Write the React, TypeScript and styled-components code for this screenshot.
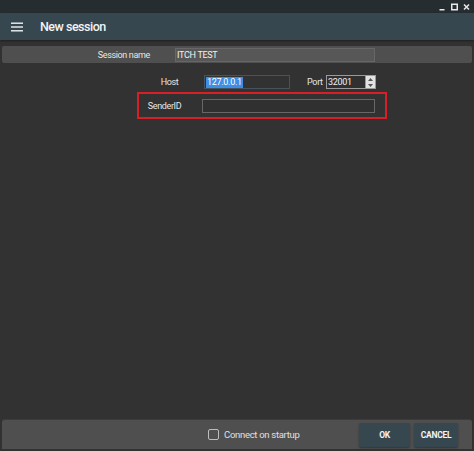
import * as React from 'react'
import styled, {createGlobalStyle} from 'styled-components'

const Global = createGlobalStyle`
  html, body {
    margin: 0;
    padding: 0;
    background: #323232;
    font-family: Roboto, "Liberation Sans", sans-serif;
  }
`;

const Window = styled.div`
  width: 474px;
  height: 451px;
  display: flex;
  flex-direction: column;
  background: #323232;
  overflow: hidden;
`;

const TitleBar = styled.div`
  height: 13px;
  background: #262d31;
  display: flex;
  justify-content: flex-end;
  align-items: center;
  gap: 5px;
  padding-right: 4px;
`;

const AppBar = styled.div`
  height: 27px;
  background: #37474f;
  display: flex;
  align-items: center;
  padding-left: 11px;
  box-shadow: 0 1px 2px rgba(0,0,0,0.4);
`;

const Title = styled.div`
  margin-left: 17px;
  color: #f2f4f5;
  font-size: 12.5px;
  font-weight: 500;
  letter-spacing: -0.5px;
`;

const Content = styled.div`
  flex: 1;
  padding: 6px 2px 0;
`;

const SessionRow = styled.div`
  height: 17px;
  background: #4f4f4f;
  border-radius: 2px;
  display: flex;
  align-items: center;
`;

// shared look of the small form captions
const Label = styled.div<{width: number; gap?: number; align?: string}>`
  width: ${p => p.width}px;
  margin-right: ${p => p.gap || 0}px;
  text-align: ${p => p.align || 'center'};
  color: #e6e6e6;
  font-size: 9px;
  letter-spacing: -0.35px;
  flex-shrink: 0;
`;

const Field = styled.div<{width: number; focused?: boolean}>`
  width: ${p => p.width}px;
  height: 14px;
  box-sizing: border-box;
  border: 1px solid ${p => p.focused ? '#44535e' : '#676767'};
  background: ${p => p.focused ? '#323232' : '#575757'};
  color: #f0f0f0;
  font-size: 9px;
  letter-spacing: -0.3px;
  display: flex;
  align-items: center;
  padding-left: 1px;
`;

const Selected = styled.span`
  background: #3d8ee6;
  color: #ffffff;
  line-height: 11px;
  padding: 0 1px;
`;

const Form = styled.div`
  margin: 12px 0 0 135px;
  display: flex;
  flex-direction: column;
  gap: 3px;
`;

const HostRow = styled.div`
  display: flex;
  align-items: center;
  padding-left: 2px;
`;

const PortLabel = styled.div`
  margin-left: 17px;
  width: 19px;
  color: #e6e6e6;
  font-size: 9px;
  letter-spacing: -0.3px;
`;

const Spinner = styled(Field)`
  background: #303030;
  border-color: #9a9a9a;
  padding-right: 0;
`;

const SpinButtons = styled.div`
  margin-left: auto;
  width: 9px;
  height: 12px;
  display: flex;
  flex-direction: column;
  background: #e2e2e2;
  border-left: 1px solid #9a9a9a;
`;

const SpinHalf = styled.div`
  flex: 1;
  display: flex;
  align-items: center;
  justify-content: center;
`;

const SenderBox = styled.div`
  width: 250px;
  height: 27px;
  box-sizing: border-box;
  border: 2px solid #d91f26;
  display: flex;
  align-items: center;
`;

const Footer = styled.div`
  margin: 0 2px 2px;
  height: 30px;
  background: #4f4f4f;
  border-top: 1px solid #3c3c3c;
  border-radius: 3px 3px 0 0;
  box-sizing: border-box;
  display: flex;
  align-items: center;
  padding-left: 206px;
`;

const Checkbox = styled.div`
  width: 11px;
  height: 11px;
  box-sizing: border-box;
  border: 1px solid #bdbdbd;
  border-radius: 2px;
`;

const CheckLabel = styled.div`
  margin-left: 5px;
  color: #e0e0e0;
  font-size: 9.5px;
  letter-spacing: -0.3px;
`;

const Button = styled.button<{width: number}>`
  width: ${p => p.width}px;
  height: 24px;
  margin-left: 4px;
  border: none;
  border-radius: 2px;
  background: #37474f;
  color: #f4f4f4;
  font-family: Roboto, "Liberation Sans", sans-serif;
  font-size: 8.5px;
  font-weight: 700;
  letter-spacing: -0.3px;
  padding: 0;
  box-shadow: 0 1px 2px rgba(0,0,0,0.35);
`;

const ButtonSpacer = styled.div`
  margin-left: auto;
`;

const Hamburger = () => (
    <svg width="12" height="10" viewBox="0 0 12 10">
        <rect x="0" y="0.5" width="12" height="1.4" fill="#eef1f2"/>
        <rect x="0" y="4.3" width="12" height="1.4" fill="#eef1f2"/>
        <rect x="0" y="8.1" width="12" height="1.4" fill="#eef1f2"/>
    </svg>
);

const WinControls = () => (
    <>
        <svg width="7" height="8" viewBox="0 0 7 8">
            <rect x="0.5" y="6" width="5" height="1.5" fill="#e8e8e8"/>
        </svg>
        <svg width="7" height="8" viewBox="0 0 7 8">
            <rect x="0.75" y="1.25" width="5.5" height="5.5" fill="none" stroke="#e8e8e8" strokeWidth="1.5"/>
        </svg>
        <svg width="7" height="8" viewBox="0 0 7 8">
            <path d="M1 1.5 L6 6.5 M6 1.5 L1 6.5" stroke="#e8e8e8" strokeWidth="1.5"/>
        </svg>
    </>
);

export default function App() {
    return <Window>
        <Global/>
        <TitleBar><WinControls/></TitleBar>
        <AppBar>
            <Hamburger/>
            <Title>New session</Title>
        </AppBar>
        <Content>
            <SessionRow>
                <Label width={148} gap={25} align="right">Session name</Label>
                <Field width={200}>ITCH TEST</Field>
            </SessionRow>
            <Form>
                <HostRow>
                    <Label width={61} gap={4}>Host</Label>
                    <Field width={86} focused><Selected>127.0.0.1</Selected></Field>
                    <PortLabel>Port</PortLabel>
                    <Spinner width={50}>
                        32001
                        <SpinButtons>
                            <SpinHalf>
                                <svg width="5" height="3" viewBox="0 0 5 3"><path d="M0 3 L2.5 0 L5 3Z" fill="#555"/></svg>
                            </SpinHalf>
                            <SpinHalf>
                                <svg width="5" height="3" viewBox="0 0 5 3"><path d="M0 0 L2.5 3 L5 0Z" fill="#555"/></svg>
                            </SpinHalf>
                        </SpinButtons>
                    </Spinner>
                </HostRow>
                <SenderBox>
                    <Label width={51} gap={12}>SenderID</Label>
                    <Field width={173} style={{background: '#303030'}}/>
                </SenderBox>
            </Form>
        </Content>
        <Footer>
            <Checkbox/>
            <CheckLabel>Connect on startup</CheckLabel>
            <ButtonSpacer/>
            <Button width={51}>OK</Button>
            <Button width={44} style={{marginRight: 14}}>CANCEL</Button>
        </Footer>
    </Window>
}
